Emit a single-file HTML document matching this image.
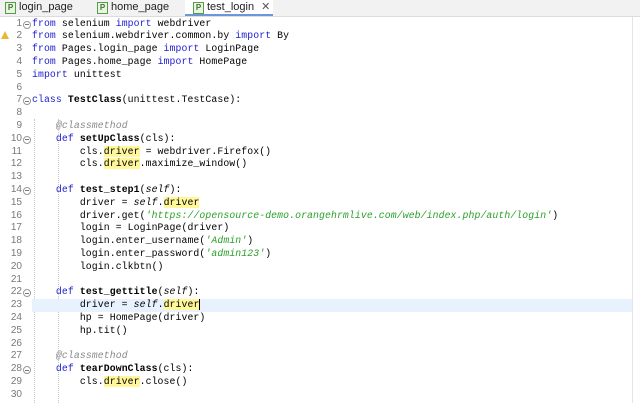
<!DOCTYPE html>
<html><head><style>
body{margin:0;width:640px;height:403px;overflow:hidden;background:#fff;position:relative;font-family:"Liberation Sans",sans-serif}
.tabs{position:absolute;left:0;top:0;width:640px;height:16px;background:#f2f2f2;border-bottom:1px solid #dcdcdc}
.tab{position:absolute;top:0;height:16px;font-size:11px;color:#222}
.tab .ic{position:absolute;left:0;top:2px;width:9px;height:10px;border:1px solid #5a9a4a;background:#e9f5e2;color:#3a7a2a;font-size:8px;line-height:10px;text-align:center;font-weight:bold}
.tab .tx{position:absolute;left:14px;top:1px;line-height:13px;white-space:nowrap}
.active{background:#fff;border-bottom:2px solid #6d96d6;height:14px}
.code{position:absolute;left:0;top:17.6px;width:640px}
.ln{position:relative;height:12.8px;line-height:12.8px;font-family:"Liberation Mono",monospace;font-size:9.8px;letter-spacing:0.1px;white-space:pre;color:#000}
.num{position:absolute;left:0;width:22px;text-align:right;color:#787878;font-family:"Liberation Sans",sans-serif;font-size:10px;letter-spacing:0}
.fold{position:absolute;left:23px;top:3px;width:6px;height:6px;border:1px solid #999;border-radius:50%;font-size:0}
.fold:after{content:"";position:absolute;left:1px;top:2.5px;width:4px;height:1px;background:#777}
.t{position:absolute;left:32px}
.k{color:#1d1dd0}
.s{color:#2aa02a;font-style:italic}
.d{color:#8a8a8a;font-style:italic}
.i{font-style:italic}
.b{font-weight:bold}
.h{background:#fff79a}
.cur{background:#e8f2fe}
.guide{position:absolute;border-left:1px dotted #c8c8c8}
</style></head><body>
<div class="tabs">
<div class="tab" style="left:5px;width:70px"><span class="ic">P</span><span class="tx">login_page</span></div>
<div class="tab" style="left:97px;width:80px"><span class="ic">P</span><span class="tx">home_page</span></div>
<div class="tab active" style="left:185px;width:88px"><span class="ic" style="left:8px">P</span><span class="tx" style="left:22px">test_login <span style="color:#555;margin-left:4px">✕</span></span></div>
</div>
<div style="position:absolute;left:632px;top:17px;width:1px;height:386px;background:#e4e4e4"></div>
<div class="guide" style="left:58px;top:119px;height:284px"></div>
<div class="guide" style="left:34px;top:119px;height:284px"></div>
<div style="position:absolute;left:1px;top:31px;width:0;height:0;border-left:4px solid transparent;border-right:4px solid transparent;border-bottom:8px solid #e8b830"></div>
<div class="code">
<div class="ln"><span class="num">1</span><span class="fold"></span><span class="t"><span class="k">from</span> selenium <span class="k">import</span> webdriver</span></div>
<div class="ln"><span class="num">2</span><span class="t"><span class="k">from</span> selenium.webdriver.common.by <span class="k">import</span> By</span></div>
<div class="ln"><span class="num">3</span><span class="t"><span class="k">from</span> Pages.login_page <span class="k">import</span> LoginPage</span></div>
<div class="ln"><span class="num">4</span><span class="t"><span class="k">from</span> Pages.home_page <span class="k">import</span> HomePage</span></div>
<div class="ln"><span class="num">5</span><span class="t"><span class="k">import</span> unittest</span></div>
<div class="ln"><span class="num">6</span></div>
<div class="ln"><span class="num">7</span><span class="fold"></span><span class="t"><span class="k">class</span> <span class="b">TestClass</span>(unittest.TestCase):</span></div>
<div class="ln"><span class="num">8</span></div>
<div class="ln"><span class="num">9</span><span class="t">    <span class="d">@classmethod</span></span></div>
<div class="ln"><span class="num">10</span><span class="fold"></span><span class="t">    <span class="k">def</span> <span class="b">setUpClass</span>(cls):</span></div>
<div class="ln"><span class="num">11</span><span class="t">        cls.<span class="h">driver</span> = webdriver.Firefox()</span></div>
<div class="ln"><span class="num">12</span><span class="t">        cls.<span class="h">driver</span>.maximize_window()</span></div>
<div class="ln"><span class="num">13</span></div>
<div class="ln"><span class="num">14</span><span class="fold"></span><span class="t">    <span class="k">def</span> <span class="b">test_step1</span>(<span class="i">self</span>):</span></div>
<div class="ln"><span class="num">15</span><span class="t">        driver = <span class="i">self</span>.<span class="h">driver</span></span></div>
<div class="ln"><span class="num">16</span><span class="t">        driver.get(<span class="s">'https://opensource-demo.orangehrmlive.com/web/index.php/auth/login'</span>)</span></div>
<div class="ln"><span class="num">17</span><span class="t">        login = LoginPage(driver)</span></div>
<div class="ln"><span class="num">18</span><span class="t">        login.enter_username(<span class="s">'Admin'</span>)</span></div>
<div class="ln"><span class="num">19</span><span class="t">        login.enter_password(<span class="s">'admin123'</span>)</span></div>
<div class="ln"><span class="num">20</span><span class="t">        login.clkbtn()</span></div>
<div class="ln"><span class="num">21</span></div>
<div class="ln"><span class="num">22</span><span class="fold"></span><span class="t">    <span class="k">def</span> <span class="b">test_gettitle</span>(<span class="i">self</span>):</span></div>
<div class="ln"><span class="num">23</span><span class="t cur" style="right:8px">        driver = <span class="i">self</span>.<span class="h">driver</span><span style="border-left:1px solid #000"></span></span></div>
<div class="ln"><span class="num">24</span><span class="t">        hp = HomePage(driver)</span></div>
<div class="ln"><span class="num">25</span><span class="t">        hp.tit()</span></div>
<div class="ln"><span class="num">26</span></div>
<div class="ln"><span class="num">27</span><span class="t">    <span class="d">@classmethod</span></span></div>
<div class="ln"><span class="num">28</span><span class="fold"></span><span class="t">    <span class="k">def</span> <span class="b">tearDownClass</span>(cls):</span></div>
<div class="ln"><span class="num">29</span><span class="t">        cls.<span class="h">driver</span>.close()</span></div>
<div class="ln"><span class="num">30</span></div>
</div>
</body></html>
